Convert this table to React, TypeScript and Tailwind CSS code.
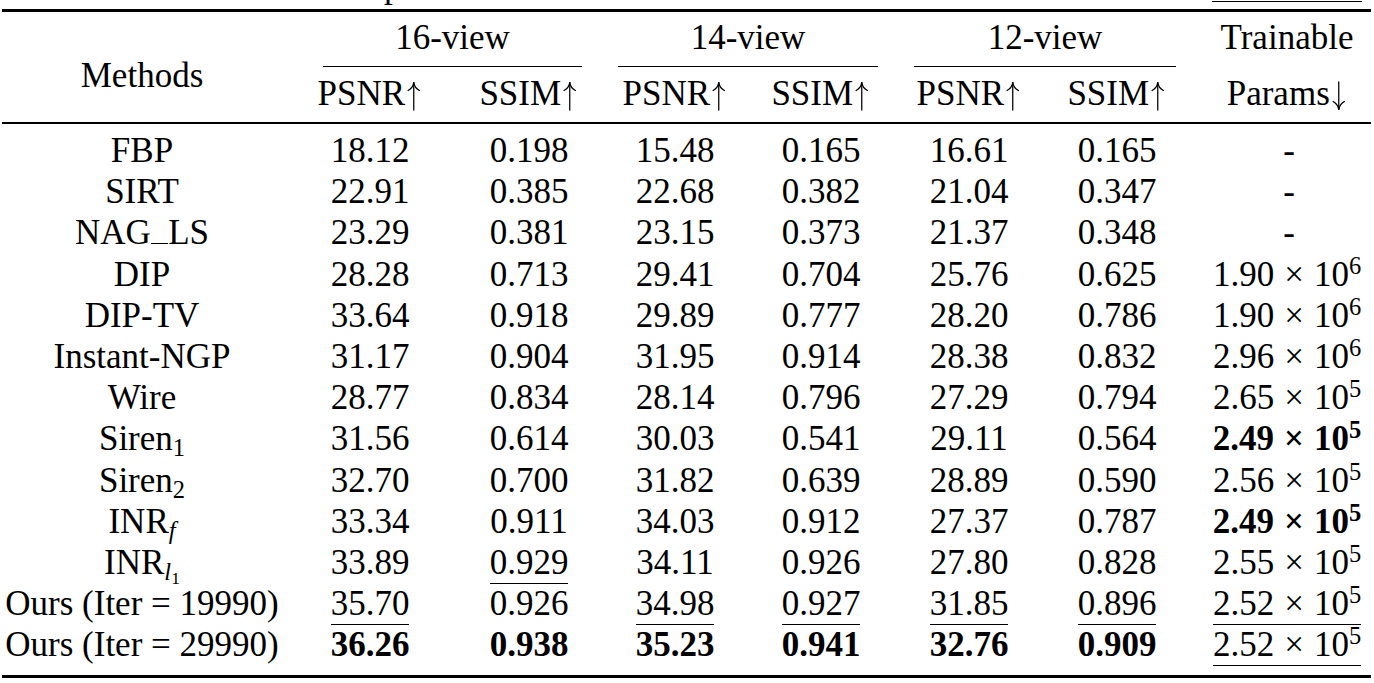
type Cell = { v: string; b?: boolean; u?: boolean };
type Params = { m: string; e: string; b?: boolean; u?: boolean } | null;
type Row = { name: React.ReactNode; cells: Cell[]; p: Params };

const c = (v: string, flag?: "b" | "u"): Cell => ({ v, b: flag === "b", u: flag === "u" });

const Sub = ({ children, italic }: { children: React.ReactNode; italic?: boolean }) => (
  <span className={"relative top-[6px] text-[24.5px] leading-none " + (italic ? "italic" : "")}>{children}</span>
);

// thin math-style arrow, like \uparrow / \downarrow
function Arrow({ down }: { down?: boolean }) {
  return (
    <svg
      viewBox="0 0 18 30"
      className={"inline-block h-[30px] w-[17.5px] align-[-6px] " + (down ? "rotate-180" : "")}
      fill="none"
      stroke="black"
      strokeWidth="1.3"
      strokeLinecap="round"
    >
      <path d="M9 1.5V29.5" />
      <path d="M9 1.2C8.4 4.8 6.4 7.6 3.2 9.4" />
      <path d="M9 1.2C9.6 4.8 11.6 7.6 14.8 9.4" />
    </svg>
  );
}

const rows: Row[] = [
  { name: "FBP", cells: [c("18.12"), c("0.198"), c("15.48"), c("0.165"), c("16.61"), c("0.165")], p: null },
  { name: "SIRT", cells: [c("22.91"), c("0.385"), c("22.68"), c("0.382"), c("21.04"), c("0.347")], p: null },
  {
    name: (
      <>
        NAG<span className="inline-block h-[1.5px] w-[17.5px] bg-black" />LS
      </>
    ),
    cells: [c("23.29"), c("0.381"), c("23.15"), c("0.373"), c("21.37"), c("0.348")],
    p: null,
  },
  { name: "DIP", cells: [c("28.28"), c("0.713"), c("29.41"), c("0.704"), c("25.76"), c("0.625")], p: { m: "1.90", e: "6" } },
  { name: "DIP-TV", cells: [c("33.64"), c("0.918"), c("29.89"), c("0.777"), c("28.20"), c("0.786")], p: { m: "1.90", e: "6" } },
  { name: "Instant-NGP", cells: [c("31.17"), c("0.904"), c("31.95"), c("0.914"), c("28.38"), c("0.832")], p: { m: "2.96", e: "6" } },
  { name: "Wire", cells: [c("28.77"), c("0.834"), c("28.14"), c("0.796"), c("27.29"), c("0.794")], p: { m: "2.65", e: "5" } },
  {
    name: (
      <>
        Siren<Sub>1</Sub>
      </>
    ),
    cells: [c("31.56"), c("0.614"), c("30.03"), c("0.541"), c("29.11"), c("0.564")],
    p: { m: "2.49", e: "5", b: true },
  },
  {
    name: (
      <>
        Siren<Sub>2</Sub>
      </>
    ),
    cells: [c("32.70"), c("0.700"), c("31.82"), c("0.639"), c("28.89"), c("0.590")],
    p: { m: "2.56", e: "5" },
  },
  {
    name: (
      <>
        INR<Sub italic>f</Sub>
      </>
    ),
    cells: [c("33.34"), c("0.911"), c("34.03"), c("0.912"), c("27.37"), c("0.787")],
    p: { m: "2.49", e: "5", b: true },
  },
  {
    name: (
      <>
        INR
        <Sub italic>
          l<span className="relative top-[4px] text-[17.5px] not-italic">1</span>
        </Sub>
      </>
    ),
    cells: [c("33.89"), c("0.929", "u"), c("34.11"), c("0.926"), c("27.80"), c("0.828")],
    p: { m: "2.55", e: "5" },
  },
  {
    name: "Ours (Iter = 19990)",
    cells: [c("35.70", "u"), c("0.926"), c("34.98", "u"), c("0.927", "u"), c("31.85", "u"), c("0.896", "u")],
    p: { m: "2.52", e: "5", u: true },
  },
  {
    name: "Ours (Iter = 29990)",
    cells: [c("36.26", "b"), c("0.938", "b"), c("35.23", "b"), c("0.941", "b"), c("32.76", "b"), c("0.909", "b")],
    p: { m: "2.52", e: "5", u: true },
  },
];

function Under({ on, children }: { on?: boolean; children: React.ReactNode }) {
  if (!on) return <>{children}</>;
  return <span className="inline-block border-b border-black pb-[3px] leading-[35px]">{children}</span>;
}

function ParamsCell({ p }: { p: Params }) {
  if (!p) return <div className="pl-[14px]">-</div>;
  return (
    <div className={"whitespace-nowrap pl-[10px] " + (p.b ? "font-bold" : "")}>
      <Under on={p.u}>
        {p.m}
        <span className="mx-[10px]">×</span>
        10
        <span className="relative -top-[12px] text-[24.5px] leading-none">{p.e}</span>
      </Under>
    </div>
  );
}

const cols = "grid grid-cols-[284px_172px_146px_146px_146px_150px_146px_184px]";

export default function App() {
  return (
    <div className="h-[683px] w-[1374px] overflow-hidden bg-white font-['Liberation_Serif','Times_New_Roman',serif] text-[35px] text-black">
      <div className="flex h-[8px] items-start overflow-hidden">
        <span className="-mt-[32px] ml-[384px] leading-[35px]">p</span>
        <div className="ml-auto mr-[12px] mt-[1px] h-[1px] w-[150px] bg-black" />
      </div>
      <div className="ml-[2px] mr-[3px] mt-[1px] h-[3px] bg-black" />

      <div className={cols + " grid-rows-[55px_55px] text-center leading-[41.2px]"}>
        <div className="row-span-2 pt-[43px]">Methods</div>
        <div className="col-span-2 flex flex-col pt-[5px]">
          <div className="ml-[39px] mr-[20px]">16-view</div>
          <div className="ml-[39px] mr-[20px] mt-auto h-[1px] bg-black" />
        </div>
        <div className="col-span-2 flex flex-col pt-[5px]">
          <div className="mx-[16px]">14-view</div>
          <div className="mx-[16px] mt-auto h-[1px] bg-black" />
        </div>
        <div className="col-span-2 flex flex-col pt-[5px]">
          <div className="ml-[20px] mr-[14px]">12-view</div>
          <div className="ml-[20px] mr-[14px] mt-auto h-[1px] bg-black" />
        </div>
        <div className="pl-[10px] pt-[5px]">Trainable</div>
        <div className="pt-[6px]">
          PSNR<Arrow />
        </div>
        <div className="pt-[6px]">
          SSIM<Arrow />
        </div>
        <div className="pt-[6px]">
          PSNR<Arrow />
        </div>
        <div className="pt-[6px]">
          SSIM<Arrow />
        </div>
        <div className="pt-[6px]">
          PSNR<Arrow />
        </div>
        <div className="pt-[6px]">
          SSIM<Arrow />
        </div>
        <div className="pl-[10px] pt-[6px]">
          Params<Arrow down />
        </div>
      </div>
      <div className="ml-[2px] mr-[3px] h-[2px] bg-black" />

      <div className={cols + " auto-rows-[41.2px] pt-[6px] text-center leading-[41.2px]"}>
        {rows.map((r, i) => (
          <div key={i} className="contents">
            <div className="whitespace-nowrap">{r.name}</div>
            {r.cells.map((cell, j) => (
              <div key={j} className={cell.b ? "font-bold" : ""}>
                <Under on={cell.u}>{cell.v}</Under>
              </div>
            ))}
            <ParamsCell p={r.p} />
          </div>
        ))}
      </div>
      <div className="ml-[2px] mr-[3px] mt-[10px] h-[3px] bg-black" />
    </div>
  );
}
